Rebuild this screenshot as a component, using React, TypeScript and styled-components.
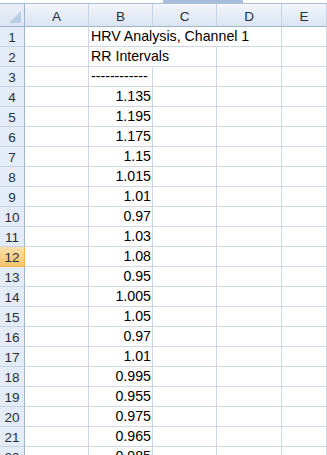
import React from 'react';
import styled, { createGlobalStyle } from 'styled-components';

const GlobalStyle = createGlobalStyle`
    html, body {
        margin: 0;
        padding: 0;
        background: #ffffff;
        overflow: hidden;
    }
    body {
        font-family: 'Liberation Sans', Arial, sans-serif;
    }
`;

const Sheet = styled.div`
    width: 327px;
    height: 455px;
    overflow: hidden;
    display: flex;
    flex-direction: column;
    background: #ffffff;
`;

const TopStrip = styled.div`
    height: 3px;
    flex: none;
    display: flex;
    background: #ffffff;
    border-bottom: 1px solid #a9bfd6;
`;

const StripTab = styled.div<{ $width: number; $filled?: boolean }>`
    width: ${({ $width }) => $width}px;
    flex: none;
    background: ${({ $filled }) => ($filled ? '#a7bedb' : 'transparent')};
`;

const Grid = styled.div`
    display: grid;
    grid-template-columns: 25px 64px 64px 64px 65px 1fr;
    grid-auto-rows: 20px;
    grid-template-rows: 23px;
    font-size: 14.2px;
    color: #000000;
`;

const Corner = styled.div`
    position: relative;
    background: linear-gradient(#e9eff8, #dde6f3);
    border-right: 1px solid #9eb6ce;
    border-bottom: 1px solid #9eb6ce;
    box-sizing: border-box;
    overflow: hidden;

    &::after {
        content: '';
        position: absolute;
        right: 3px;
        bottom: 3px;
        width: 0;
        height: 0;
        border-left: 12px solid transparent;
        border-bottom: 12px solid #b9cde6;
    }
`;

const ColHead = styled.div`
    display: flex;
    align-items: center;
    justify-content: center;
    background: linear-gradient(#f4f7fb 0%, #e6edf7 45%, #dbe5f2 100%);
    border-right: 1px solid #c5d3e4;
    border-bottom: 1px solid #9eb6ce;
    box-sizing: border-box;
    color: #27313d;
    font-size: 13.5px;
    padding-top: 2px;
`;

const RowHead = styled.div<{ $active?: boolean }>`
    display: flex;
    align-items: center;
    justify-content: center;
    background: ${({ $active }) => ($active ? 'linear-gradient(#fbe1ac, #f4c46c)' : '#e4ecf7')};
    border-right: 1px solid ${({ $active }) => ($active ? '#f0b449' : '#9eb6ce')};
    border-bottom: 1px solid ${({ $active }) => ($active ? '#f0b449' : '#c5d3e4')};
    box-sizing: border-box;
    color: #27313d;
    font-size: 13.5px;
    padding-top: 1px;
`;

const Cell = styled.div<{ $spill?: boolean; $align?: 'left' | 'right' }>`
    position: relative;
    display: flex;
    align-items: flex-end;
    justify-content: ${({ $align }) => ($align === 'right' ? 'flex-end' : 'flex-start')};
    border-right: 1px solid ${({ $spill }) => ($spill ? 'transparent' : '#d0d7e5')};
    border-bottom: 1px solid #d0d7e5;
    box-sizing: border-box;
    padding: 0 1px 2px 2px;
    white-space: nowrap;
    overflow: visible;
    z-index: 1;
`;

const CellText = styled.span`
    line-height: 16px;
`;

const columns = ['A', 'B', 'C', 'D', 'E'];

const values: string[] = [
    'HRV Analysis, Channel 1',
    'RR Intervals',
    '------------',
    '1.135',
    '1.195',
    '1.175',
    '1.15',
    '1.015',
    '1.01',
    '0.97',
    '1.03',
    '1.08',
    '0.95',
    '1.005',
    '1.05',
    '0.97',
    '1.01',
    '0.995',
    '0.955',
    '0.975',
    '0.965',
    '0.985',
];

// how many columns the text in B runs across, to the right of B
const spillSpan = (row: number): number => {
    if (row === 1) return 2;
    if (row === 2) return 1;
    return 0;
};

const App: React.FunctionComponent = () => (
    <Sheet>
        <GlobalStyle />
        <TopStrip>
            <StripTab $width={163} />
            <StripTab $width={80} $filled />
        </TopStrip>
        <Grid>
            <Corner />
            {columns.map((c) => (
                <ColHead key={c}>{c}</ColHead>
            ))}
            {values.map((v, i) => {
                const row = i + 1;
                const span = spillSpan(row);
                const numeric = row > 3;
                return (
                    <React.Fragment key={row}>
                        <RowHead $active={row === 12}>{row}</RowHead>
                        <Cell />
                        <Cell $spill={span > 0} $align={numeric ? 'right' : 'left'}>
                            <CellText>{v}</CellText>
                        </Cell>
                        <Cell $spill={span > 1} />
                        <Cell />
                        <Cell />
                    </React.Fragment>
                );
            })}
        </Grid>
    </Sheet>
);

export default App;
